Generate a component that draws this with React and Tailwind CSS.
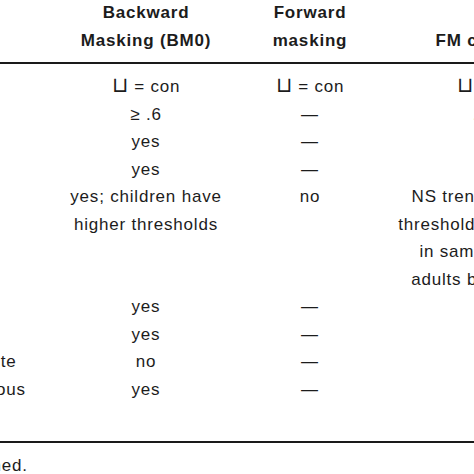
const Cup = () => <span className="text-[21px] leading-none">⊔</span>;

const cupCon = (
  <>
    <Cup /> = con
  </>
);

const rows = [
  { label: "Comparison", bm: [cupCon], fw: cupCon, fm: [cupCon] },
  { label: "Effect size", bm: ["≥ .6"], fw: "—", fm: [".005"] },
  { label: "Replicated", bm: ["yes"], fw: "—", fm: ["yes"] },
  { label: "Reliable", bm: ["yes"], fw: "—", fm: ["yes"] },
  {
    label: "Age effect",
    bm: ["yes; children have", "higher thresholds"],
    fw: "no",
    fm: ["NS trend for higher", "thresholds for children", "in same range as", "adults but not at all"],
  },
  { label: "Specific", bm: ["yes"], fw: "—", fm: ["—"] },
  { label: "Robust", bm: ["yes"], fw: "—", fm: ["—"] },
  { label: "Deficit is absolute", bm: ["no"], fw: "—", fm: ["—"] },
  { label: "Deficits continuous", bm: ["yes"], fw: "—", fm: ["—"] },
];

const cols = "grid grid-cols-[210px_172px_156px_206px]";

export default function App() {
  return (
    <div className="w-[474px] h-[474px] overflow-hidden bg-white text-[#1c1c1c] font-['Liberation_Sans',Arial,sans-serif] text-[17px] tracking-[0.8px]">
      <div className="w-[744px] -ml-[150px] -mt-[1px]">
        {/* header */}
        <div className={`${cols} font-bold leading-[28px] text-center pb-[7px] border-b-2 border-[#1a1a1a]`}>
          <div />
          <div>
            Backward
            <br />
            Masking (BM0)
          </div>
          <div>
            Forward
            <br />
            masking
          </div>
          <div className="self-end">FM contours</div>
        </div>

        {/* body */}
        <div className="pt-[9px] pb-[38px] border-b-2 border-[#1a1a1a] leading-[27.5px]">
          {rows.map((r) => (
            <div key={r.label} className={`${cols} items-start h-auto`}>
              <div className="pl-[18px] text-left whitespace-nowrap">{r.label}</div>
              <div className="text-center">
                {r.bm.map((t, i) => (
                  <div key={i} className="h-[27.5px]">{t}</div>
                ))}
              </div>
              <div className="text-center h-[27.5px]">{r.fw}</div>
              <div className="text-center whitespace-nowrap">
                {r.fm.map((t, i) => (
                  <div key={i} className="h-[27.5px]">{t}</div>
                ))}
              </div>
            </div>
          ))}
        </div>

        <div className="pt-[9px] pl-[21px] leading-[27.5px]">— = not examined.</div>
      </div>
    </div>
  );
}
